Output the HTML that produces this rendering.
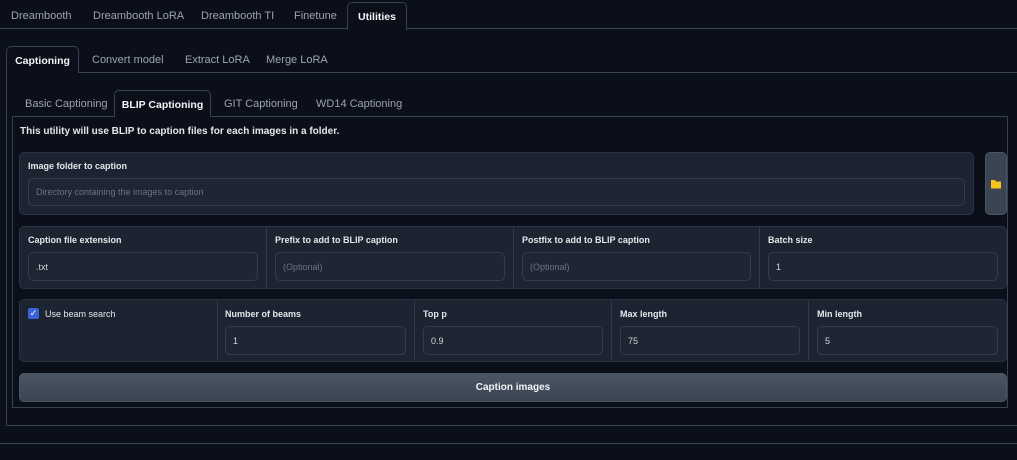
<!DOCTYPE html>
<html><head><style>
*{box-sizing:border-box;margin:0;padding:0}
body{width:1017px;height:460px;background:#0b0f19;font-family:"Liberation Sans",sans-serif;color:#e5e7eb;position:relative;overflow:hidden;font-size:10px}
.a{position:absolute}
.tab{position:absolute;font-size:11px;color:#9ca3af}
.sel{color:#f3f4f6;font-weight:bold;font-size:10.5px;border:1px solid #374151;border-bottom:none;border-radius:5px 5px 0 0;background:#0b0f19;text-align:center}
.blk{position:absolute;background:#1c2431;border:1px solid #2a3342;border-radius:5px}
.lbl{position:absolute;font-size:9px;color:#e5e7eb;font-weight:bold}
.inp{position:absolute;background:#1e2633;border:1px solid #323c4b;border-radius:5px;font-size:9px;color:#d1d5db;padding-left:7px;display:flex;align-items:center}
.ph{color:#6b7280}
.vl{position:absolute;width:1px;background:#2f3947}
</style></head><body>
<div class="a" style="left:0;top:28px;width:1017px;height:416px;border-top:1px solid #374151;border-bottom:1px solid #374151"></div>
<div class="tab" style="left:11px;top:10px">Dreambooth</div>
<div class="tab" style="left:93px;top:10px">Dreambooth LoRA</div>
<div class="tab" style="left:201px;top:10px">Dreambooth TI</div>
<div class="tab" style="left:294px;top:10px">Finetune</div>
<div class="tab sel" style="left:347px;top:2px;width:60px;height:28px;padding-top:8px">Utilities</div>

<div class="a" style="left:6px;top:72px;width:1011px;height:354px;border-top:1px solid #374151;border-left:1px solid #374151;border-bottom:1px solid #374151"></div>
<div class="tab sel" style="left:6px;top:46px;width:73px;height:27px;padding-top:8px">Captioning</div>
<div class="tab" style="left:92px;top:54px">Convert model</div>
<div class="tab" style="left:185px;top:54px">Extract LoRA</div>
<div class="tab" style="left:266px;top:54px">Merge LoRA</div>

<div class="a" style="left:12px;top:116px;width:996px;height:292px;border:1px solid #374151"></div>
<div class="tab" style="left:25px;top:98px">Basic Captioning</div>
<div class="tab sel" style="left:114px;top:90px;width:97px;height:27px;padding-top:8px">BLIP Captioning</div>
<div class="tab" style="left:224px;top:98px">GIT Captioning</div>
<div class="tab" style="left:316px;top:98px">WD14 Captioning</div>

<div class="a" style="left:20px;top:126px;font-size:10px;font-weight:bold;color:#e5e7eb">This utility will use BLIP to caption files for each images in a folder.</div>

<div class="blk" style="left:19px;top:152px;width:955px;height:63px"></div>
<div class="lbl" style="left:28px;top:161px">Image folder to caption</div>
<div class="inp" style="left:28px;top:178px;width:937px;height:28px"><span class="ph">Directory containing the images to caption</span></div>
<div class="a" style="left:985px;top:152px;width:22px;height:63px;border-radius:5px;background:#3a4453;border:1px solid #4b5563"></div>
<svg class="a" style="left:990px;top:179px" width="12" height="10"><path d="M1 1h4l1 1.5h5v7H1z" fill="#f5c518"/></svg>

<div class="blk" style="left:19px;top:226px;width:988px;height:63px"></div>
<div class="vl" style="left:266px;top:227px;height:61px"></div>
<div class="vl" style="left:513px;top:227px;height:61px"></div>
<div class="vl" style="left:759px;top:227px;height:61px"></div>
<div class="lbl" style="left:28px;top:235px">Caption file extension</div>
<div class="lbl" style="left:275px;top:235px">Prefix to add to BLIP caption</div>
<div class="lbl" style="left:522px;top:235px">Postfix to add to BLIP caption</div>
<div class="lbl" style="left:768px;top:235px">Batch size</div>
<div class="inp" style="left:28px;top:252px;width:230px;height:29px">.txt</div>
<div class="inp" style="left:275px;top:252px;width:230px;height:29px"><span class="ph">(Optional)</span></div>
<div class="inp" style="left:522px;top:252px;width:229px;height:29px"><span class="ph">(Optional)</span></div>
<div class="inp" style="left:768px;top:252px;width:230px;height:29px">1</div>

<div class="blk" style="left:19px;top:299px;width:988px;height:63px"></div>
<div class="vl" style="left:217px;top:300px;height:61px"></div>
<div class="vl" style="left:414px;top:300px;height:61px"></div>
<div class="vl" style="left:611px;top:300px;height:61px"></div>
<div class="vl" style="left:808px;top:300px;height:61px"></div>
<div class="a" style="left:28px;top:308px;width:11px;height:11px;background:#3b63d6;border-radius:2px;color:#fff;font-size:9px;line-height:11px;text-align:center">✓</div>
<div class="lbl" style="left:45px;top:309px;font-weight:normal">Use beam search</div>
<div class="lbl" style="left:225px;top:309px">Number of beams</div>
<div class="lbl" style="left:423px;top:309px">Top p</div>
<div class="lbl" style="left:620px;top:309px">Max length</div>
<div class="lbl" style="left:817px;top:309px">Min length</div>
<div class="inp" style="left:225px;top:326px;width:181px;height:29px">1</div>
<div class="inp" style="left:423px;top:326px;width:180px;height:29px">0.9</div>
<div class="inp" style="left:620px;top:326px;width:180px;height:29px">75</div>
<div class="inp" style="left:817px;top:326px;width:181px;height:29px">5</div>

<div class="a" style="left:19px;top:373px;width:988px;height:29px;border-radius:5px;background:linear-gradient(#4b5563,#3b4452);border:1px solid #4b5563;text-align:center;line-height:28px;font-size:10px;font-weight:bold;color:#f3f4f6">Caption images</div>
</body></html>
